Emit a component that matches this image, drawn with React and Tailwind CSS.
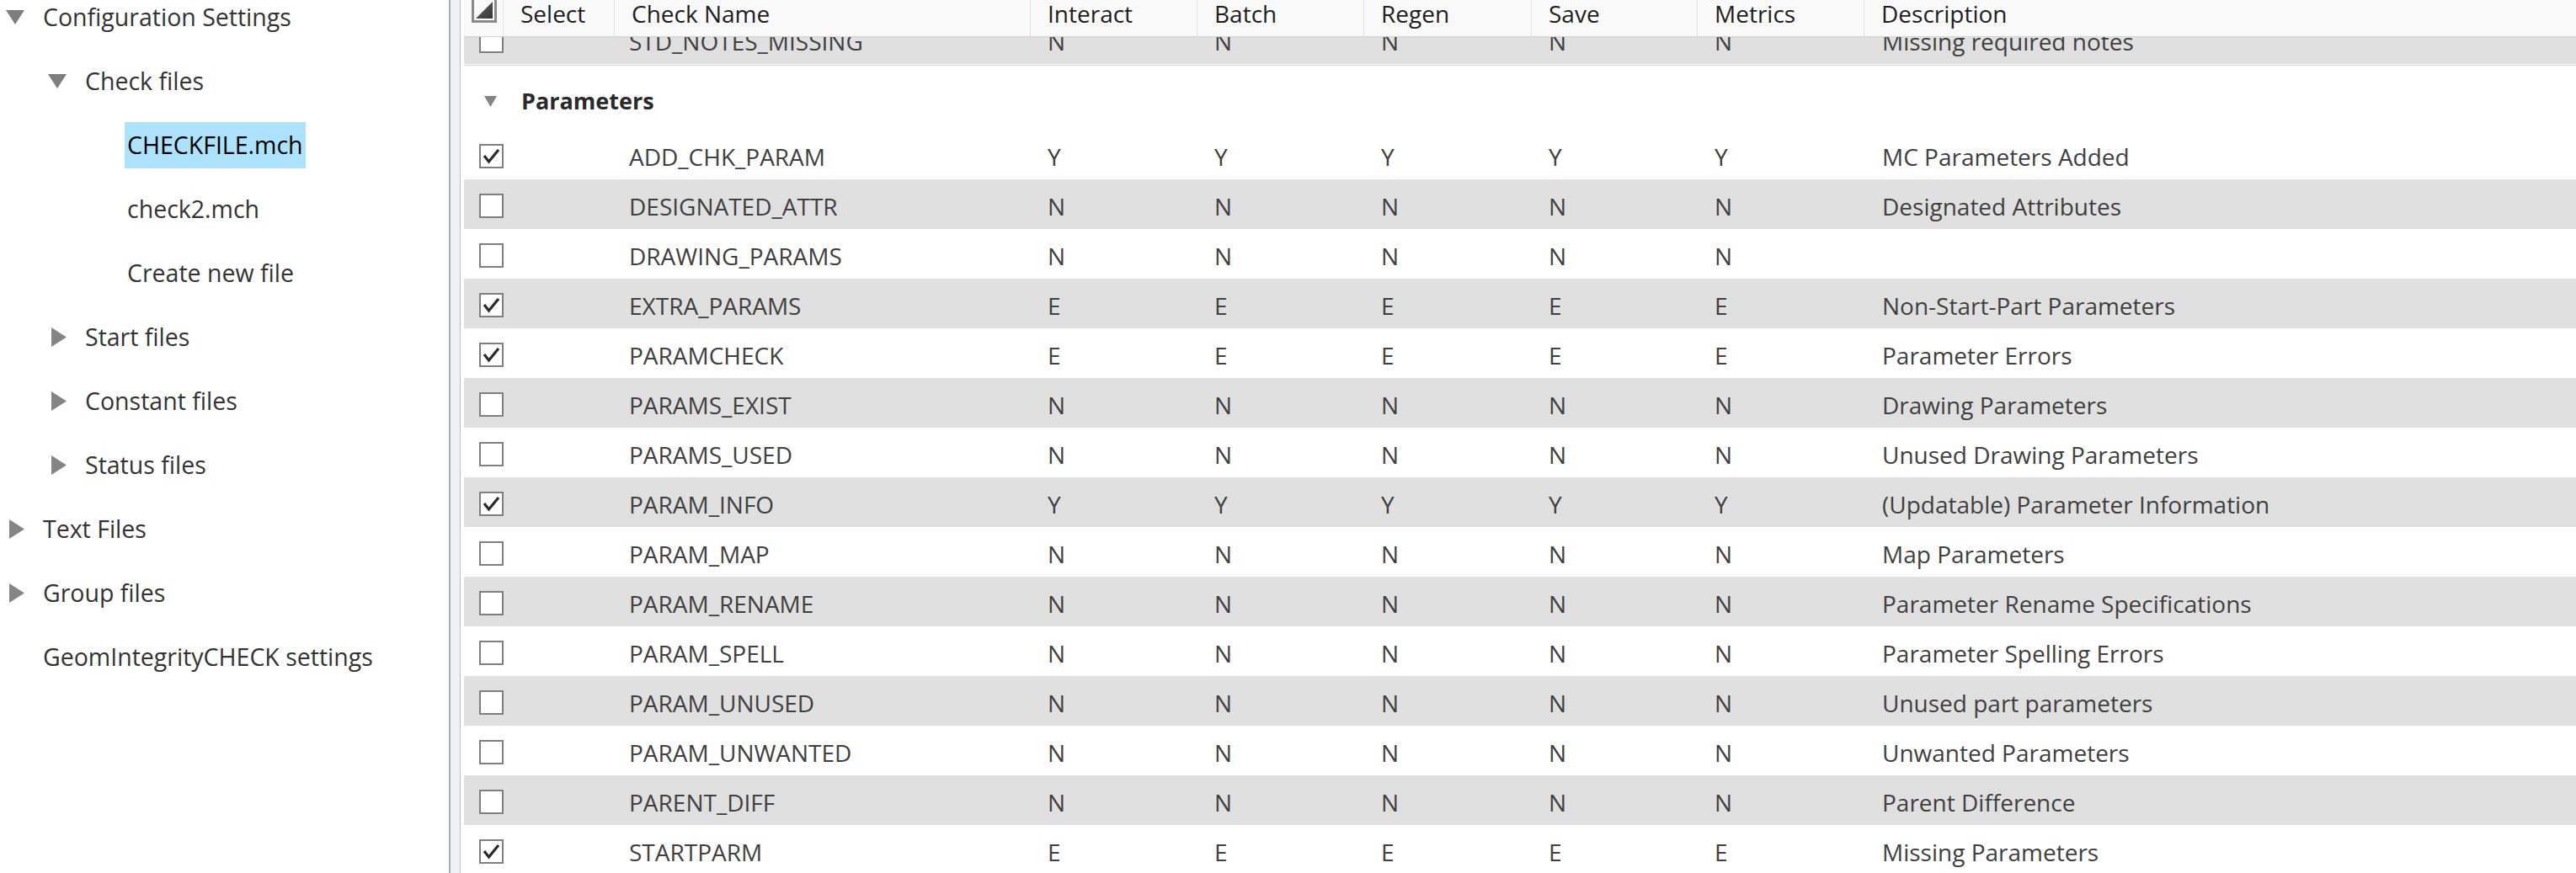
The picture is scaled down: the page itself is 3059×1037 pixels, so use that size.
import React from "react";

const tree = [
  { label: "Configuration Settings", level: 0, icon: "down" },
  { label: "Check files", level: 1, icon: "down" },
  { label: "CHECKFILE.mch", level: 2, selected: true },
  { label: "check2.mch", level: 2 },
  { label: "Create new file", level: 2 },
  { label: "Start files", level: 1, icon: "right" },
  { label: "Constant files", level: 1, icon: "right" },
  { label: "Status files", level: 1, icon: "right" },
  { label: "Text Files", level: 0, icon: "right" },
  { label: "Group files", level: 0, icon: "right" },
  { label: "GeomIntegrityCHECK settings", level: 0 },
];

const rows = [
  ["ADD_CHK_PARAM", true, "Y", "MC Parameters Added"],
  ["DESIGNATED_ATTR", false, "N", "Designated Attributes"],
  ["DRAWING_PARAMS", false, "N", ""],
  ["EXTRA_PARAMS", true, "E", "Non-Start-Part Parameters"],
  ["PARAMCHECK", true, "E", "Parameter Errors"],
  ["PARAMS_EXIST", false, "N", "Drawing Parameters"],
  ["PARAMS_USED", false, "N", "Unused Drawing Parameters"],
  ["PARAM_INFO", true, "Y", "(Updatable) Parameter Information"],
  ["PARAM_MAP", false, "N", "Map Parameters"],
  ["PARAM_RENAME", false, "N", "Parameter Rename Specifications"],
  ["PARAM_SPELL", false, "N", "Parameter Spelling Errors"],
  ["PARAM_UNUSED", false, "N", "Unused part parameters"],
  ["PARAM_UNWANTED", false, "N", "Unwanted Parameters"],
  ["PARENT_DIFF", false, "N", "Parent Difference"],
  ["STARTPARM", true, "E", "Missing Parameters"],
];

const columns = ["Select", "Check Name", "Interact", "Batch", "Regen", "Save", "Metrics", "Description"];

const grid = "grid grid-cols-[47px_132px_494px_198px_198px_199px_197px_198px_1fr]";

const Expander = ({ type }) =>
  type === "down" ? (
    <svg width="22" height="17" viewBox="0 0 22 17">
      <polygon points="0,0 22,0 11,17" fill="#7e7e7e" />
    </svg>
  ) : (
    <svg width="18" height="23" viewBox="0 0 18 23">
      <polygon points="0,0 18,11.5 0,23" fill="#858585" />
    </svg>
  );

const CheckBox = ({ checked }) => (
  <div className="w-[29px] h-[29px] border-2 border-[#7f7f7f] bg-white flex items-center justify-center">
    {checked && (
      <svg width="25" height="25" viewBox="0 0 25 25">
        <path d="M4 12 L9.5 19 L21 5" fill="none" stroke="#2a2a2a" strokeWidth="3.2" />
      </svg>
    )}
  </div>
);

const DataRow = ({ name, checked, value, desc, shaded }) => (
  <div className={`${grid} h-[59px] shrink-0 items-center pt-[4px] ${shaded ? "bg-[#e0e0e0]" : "bg-white"}`}>
    <div className="col-span-2 pl-[18px]">
      <CheckBox checked={checked} />
    </div>
    <div className="pl-[17px]">{name}</div>
    {[0, 1, 2, 3, 4].map((i) => (
      <div key={i} className="pl-[20px]">
        {value}
      </div>
    ))}
    <div className="pl-[21px] whitespace-nowrap">{desc}</div>
  </div>
);

export default function App() {
  return (
    <div className="w-[3059px] h-[1037px] overflow-hidden bg-white flex font-['Open_Sans',sans-serif] text-[28px]">
      {/* tree panel */}
      <div className="w-[533px] shrink-0 text-[#333333] text-[28.5px]">
        <div className="-mt-[18px] flex flex-col">
          {tree.map((item) => (
            <div
              key={item.label}
              className="h-[76px] flex items-center"
              style={{ paddingLeft: item.level * 50 }}
            >
              <div className="w-[29px] flex justify-end">
                {item.icon && <Expander type={item.icon} />}
              </div>
              {item.selected ? (
                <div className="ml-[19px] h-[55px] px-[3px] flex items-center bg-[#ade2fc] text-black">
                  {item.label}
                </div>
              ) : (
                <div className="ml-[22px] whitespace-nowrap">{item.label}</div>
              )}
            </div>
          ))}
        </div>
      </div>

      {/* splitter */}
      <div className="w-[14px] shrink-0 bg-[#eef0f3] border-l-2 border-l-[#adadad] border-r border-r-[#bfbfbf]" />

      {/* grid */}
      <div className="ml-[4px] flex-1 flex flex-col min-w-0 text-[#404040]">
        <div className={`${grid} h-[44px] shrink-0 bg-[#f9f9f9] border-b border-[#d4d4d4] text-[#1e1e1e] leading-[33px] relative z-10`}>
          <div className="border-r border-[#e3e3e3] pl-[9px]">
            <div className="-mt-[3px] w-[30px] h-[30px] border-[3px] border-[#8a8a8a] bg-[#fafafa] p-[1px]">
              <svg width="22" height="22" viewBox="0 0 22 22">
                <defs>
                  <linearGradient id="tri" x1="0" y1="0" x2="1" y2="1">
                    <stop offset="0" stopColor="#6a6a6a" />
                    <stop offset="1" stopColor="#333333" />
                  </linearGradient>
                </defs>
                <polygon points="1,21 21,1 21,21" fill="url(#tri)" />
              </svg>
            </div>
          </div>
          {columns.map((c, i) => (
            <div
              key={c}
              className={`pl-[20px] whitespace-nowrap ${i < columns.length - 1 ? "border-r border-[#e3e3e3]" : ""}`}
            >
              {c}
            </div>
          ))}
        </div>

        <div className="flex-1 min-h-0 overflow-hidden flex flex-col">
          <div className="-mt-[27px]">
            <DataRow name="STD_NOTES_MISSING" checked={false} value="N" desc="Missing required notes" shaded />
          </div>
          <div className="h-[2px] shrink-0 border-t border-white bg-[#cfcfcf]" />

          <div className="h-[76px] shrink-0 flex items-center pt-[8px]">
            <svg className="ml-[24px]" width="15" height="13" viewBox="0 0 15 13">
              <polygon points="0,0 15,0 7.5,13" fill="#858585" />
            </svg>
            <span className="ml-[29px] font-bold text-[27px] text-[#2a2a2a]">Parameters</span>
          </div>

          {rows.map(([name, checked, value, desc], i) => (
            <DataRow
              key={name}
              name={name}
              checked={checked}
              value={value}
              desc={desc}
              shaded={i % 2 === 1}
            />
          ))}
        </div>
      </div>
    </div>
  );
}
